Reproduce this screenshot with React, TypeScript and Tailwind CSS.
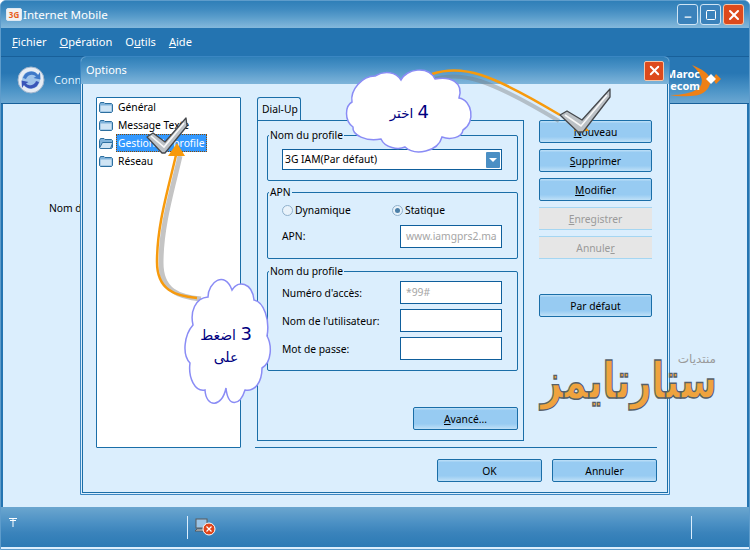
import type { ReactNode } from "react";
import { Minus, Square, X } from "lucide-react";

const font = { fontFamily: '"Noto Sans", "DejaVu Sans", sans-serif' };
const arabic = { fontFamily: '"DejaVu Sans", sans-serif' };

function Btn({ w = "w-[113px]", label, u, after, off }: { w?: string; label?: string; u: string; after?: string; off?: boolean }) {
  if (off) {
    return (
      <div className={`${w} h-[23px] shrink-0 flex items-center justify-center bg-[#e6e6e6] border-y border-[#a5d6f2] pt-[2px] text-[10.3px] text-[#9a9a9a]`}>
        {label}<span className="underline">{u}</span>{after}
      </div>
    );
  }
  return (
    <button className={`${w} h-[23px] shrink-0 flex items-center justify-center rounded-[2px] border border-[#1a6ea8] bg-[linear-gradient(#bfe0f7_0,#97cbf2_12%,#97cbf2_75%,#bfe0f7_100%)] pt-[2px] text-[10.3px] text-black`}>
      {label}<span className="underline">{u}</span>{after}
    </button>
  );
}

function Group({ title, className, children }: { title: string; className: string; children: ReactNode }) {
  return (
    <div className={`relative ml-[9px] mr-[5px] rounded-[2px] border border-[#1a6ea8] ${className}`}>
      <span className="absolute left-[1px] top-[-8px] bg-[#dbeefd] px-px text-[10.3px] leading-[14px] text-black">{title}</span>
      {children}
    </div>
  );
}

function Input({ value, className = "w-[102px]" }: { value?: string; className?: string }) {
  return (
    <div className={`${className} h-[23px] border border-[#0f5f9c] bg-white px-[5px] text-[10.3px] leading-[20px] text-[#a5a5a5]`}>{value}</div>
  );
}

function Folder({ open }: { open?: boolean }) {
  return (
    <svg width="14" height="11" viewBox="0 0 14 11" className="shrink-0">
      <path d="M.5 2.5 L1.5 .5 H5 L6 1.5 H12.5 L13.5 2.5 V9.5 L12.5 10.5 H1.5 L.5 9.5 Z" fill="#7fb2da" stroke="#2d6f9f" />
      {open ? <path d="M.5 10 L3.5 4.5 H13.8 L11.5 10.5 H1.5 Z" fill="#cfe4f4" stroke="#2d6f9f" /> : <rect x="1.5" y="3.5" width="11" height="6" fill="#cfe4f4" />}
    </svg>
  );
}

function Check({ d, hi }: { d: string; hi: string }) {
  return (
    <g>
      <path d={d} fill="#bcc1c6" stroke="#45484c" strokeWidth="1.3" strokeLinejoin="round" />
      <path d={hi} fill="none" stroke="#f8f8f8" strokeWidth="1.6" />
    </g>
  );
}

export default function App() {
  return (
    <div style={font} className="relative h-[550px] w-[750px] overflow-hidden flex flex-col rounded-t-[6px] bg-[#2b7ab5] border border-[#5e9ccb] text-black">
      {/* main window */}
      <div className="h-[27px] shrink-0 flex items-center bg-[linear-gradient(#2f7fb8_0,#3f8ac0_30%,#5a9dcb_60%,#84b8dc_100%)] pl-[5px] pr-[5px]">
        <span className="h-[13px] w-[16px] rounded-[2px] border border-[#dfe9f2] bg-[#f2f2f2] text-[8px] leading-[11px] font-bold text-[#e8601c] text-center">3G</span>
        <span className="ml-[1px] text-[11.6px] text-white">Internet Mobile</span>
        <div className="ml-auto flex gap-[2px]">
          <span className="flex h-[21px] w-[21px] items-end justify-center rounded-[3px] border border-[#cfe4f4] bg-[#3b82bb] pb-[2px]"><Minus size={10} strokeWidth={3} className="text-white" /></span>
          <span className="flex h-[21px] w-[21px] items-center justify-center rounded-[3px] border border-[#cfe4f4] bg-[#3b82bb]"><Square size={12} strokeWidth={2} className="text-white" /></span>
          <span className="flex h-[21px] w-[21px] items-center justify-center rounded-[3px] border border-[#f3c5a8] bg-[#dd4a1c]"><X size={16} strokeWidth={3} className="text-white" /></span>
        </div>
      </div>
      <div className="h-[28px] shrink-0 flex items-center gap-[13px] bg-[#2474b1] pl-[11px] text-[11.1px] text-white">
        <span><u>F</u>ichier</span>
        <span><u>O</u>pération</span>
        <span>O<u>u</u>tils</span>
        <span><u>A</u>ide</span>
      </div>
      <div className="h-[48px] shrink-0 flex items-center justify-between border-y border-[#18609a] bg-[linear-gradient(#2877b4_0,#2877b4_35%,#4f96c8_75%,#6ba7d2_100%)] pl-[16px] pr-[27px]">
        <div className="flex items-center gap-[9px]">
          <svg width="28" height="28" viewBox="0 0 28 28">
            <circle cx="14" cy="14" r="13" fill="#e6ecf4" stroke="#9fb4cc" />
            <circle cx="14" cy="14" r="9" fill="#9fc3ea" />
            <path d="M6 12 A8.5 8.5 0 0 1 21 9 L23 6 L23.5 13.5 L16.5 12 L19 10.5 A6 6 0 0 0 9 13 Z" fill="#3f78c8" />
            <path d="M22 16 A8.5 8.5 0 0 1 7 19 L5 22 L4.5 14.5 L11.5 16 L9 17.5 A6 6 0 0 0 19 15 Z" fill="#3a55b8" />
          </svg>
          <span className="text-[11.1px] text-[#dbeefd]">Connexion</span>
        </div>
        <div className="relative h-[33px] w-[52px]">
          <svg width="52" height="33" viewBox="0 0 52 33" className="absolute left-0 top-0">
            <path d="M0 31 Q18 31 28 25 Q38 16 22 1 Q44 10 40 20 Q36 32 20 32 Q8 33 0 31 Z" fill="#ee8016" />
            <path d="M46 10 L51 15 L46 20 L43 15 Z" fill="#ee8016" />
            <path d="M41 10 L46 15 L41 20 L36 15 Z" fill="#fff" />
          </svg>
          <div className="absolute right-[22px] top-[4px] w-[48px] whitespace-nowrap text-right text-[11px] leading-[12px] font-bold text-white">Maroc<br />Telecom</div>
        </div>
      </div>
      <div className="relative flex-1 border-x-2 border-[#2474b1] bg-[#dbeefd]">
        <span className="absolute left-[46px] top-[97px] text-[10.3px]">Nom de</span>
      </div>
      <div className="h-[42px] shrink-0 border-b-2 border-[#dbeefd] flex items-start bg-[linear-gradient(#6ba6cf_0,#4b90c4_40%,#3a83bb_65%,#2b7ab5_100%)] pt-[11px] pl-[8px]">
        <svg width="8" height="9" viewBox="0 0 8 9">
          <path d="M0 .5 H8 M1 2.5 H7 M4 .5 V9" stroke="#fff" fill="none" />
        </svg>
      </div>

      {/* options dialog */}
      <div className="absolute left-[79px] top-[55px] h-[439px] w-[590px] flex flex-col rounded-t-[6px] border border-[#3a86c2] bg-[#dbeefd]">
        <div className="h-[27px] shrink-0 flex items-center justify-between rounded-t-[5px] bg-[linear-gradient(#2f7fb8_0,#4a92c6_40%,#7fb5da_100%)] pl-[5px] pr-[5px]">
          <span className="text-[11px] text-white">Options</span>
          <span className="flex h-[20px] w-[20px] items-center justify-center rounded-[2px] border border-[#f3c5a8] bg-[#dd4a1c]"><X size={15} strokeWidth={3} className="text-white" /></span>
        </div>
        <div className="mx-px mb-px flex flex-1 flex-col border border-t-0 border-[#1a6ea8] px-[13px] pt-[13px]">
          <div className="flex h-[351px] gap-[16px]">
            <div className="w-[145px] rounded-[1px] border border-[#1a6ea8] bg-white pl-[2px] text-[10.3px]">
              {["Général", "Message Texte", "Gestion du profile", "Réseau"].map((t, i) => (
                <div key={t} className="flex h-[18px] items-center gap-[3px]">
                  <Folder open={i === 2} />
                  <span className={i === 2 ? "h-[18px] border border-dotted border-[#8a4a00] bg-[#3399ff] px-px leading-[17px] text-white" : "pl-[2px] pt-[2px]"}>{t}</span>
                </div>
              ))}
            </div>
            <div className="flex flex-1 gap-[15px]">
              <div className="w-[267px] flex flex-col">
                <div className="h-[23px] w-[44px] whitespace-nowrap rounded-t-[3px] border border-b-0 border-[#1a6ea8] pl-[4px] pt-[3px] text-[10.3px] leading-[16px]">Dial-Up</div>
                <div className="flex h-[321px] flex-col border border-[#1a6ea8] pt-[14px]">
                  <Group title="Nom du profile" className="h-[46px] pl-[14px] pt-[13px]">
                    <div className="flex h-[21px] w-[220px] items-center justify-between border border-[#0f5f9c] bg-white pl-[2px] pr-[1px] text-[10.3px]">
                      3G IAM(Par défaut)
                      <span className="flex h-[16px] w-[14px] items-center justify-center rounded-[1px] bg-[#4b8fc4]"><span className="h-0 w-0 border-x-[4px] border-t-[4px] border-x-transparent border-t-white" /></span>
                    </div>
                  </Group>
                  <Group title="APN" className="mt-[11px] h-[67px] pl-[14px] pt-[10px] text-[10.3px]">
                    <div className="flex h-[14px] items-center">
                      <div className="flex w-[110px] items-center">
                        <span className="h-[11px] w-[11px] rounded-full border border-[#8fb0cc] bg-[#e8f2fa]" />
                        <span className="ml-[2px] pt-[2px]">Dynamique</span>
                      </div>
                      <span className="flex h-[11px] w-[11px] items-center justify-center rounded-full border border-[#8fb0cc] bg-[#e8f2fa]"><span className="h-[5px] w-[5px] rounded-full bg-[#4b7fa8]" /></span>
                      <span className="ml-[2px] pt-[2px]">Statique</span>
                    </div>
                    <div className="mt-[8px] flex items-center justify-between pr-[15px]">
                      <span>APN:</span>
                      <Input value="www.iamgprs2.ma" />
                    </div>
                  </Group>
                  <Group title="Nom du profile" className="mt-[12px] h-[100px] pl-[14px] pr-[15px] pt-[9px] text-[10.3px]">
                    {[["Numéro d'accès:", "*99#"], ["Nom de l'utilisateur:", ""], ["Mot de passe:", ""]].map(([l, v]) => (
                      <div key={l} className="mb-[5px] flex items-center justify-between">
                        <span className="pt-[2px]">{l}</span>
                        <Input value={v} />
                      </div>
                    ))}
                  </Group>
                  <div className="mt-[36px] flex justify-end pr-[5px]"><Btn w="w-[105px]" u="A" after="vancé..." /></div>
                </div>
              </div>
              <div className="flex flex-col gap-[6px] pt-[23px]">
                <Btn u="N" after="ouveau" />
                <Btn u="S" after="upprimer" />
                <Btn u="M" after="odifier" />
                <Btn u="E" after="nregistrer" off />
                <Btn label="Annule" u="r" off />
                <div className="mt-[29px]"><Btn label="Par défaut" u="" /></div>
              </div>
            </div>
          </div>
          <div className="ml-[159px] mt-[-1px] w-[402px] shrink-0 border-t border-[#1a6ea8]" />
          <div className="ml-[341px] mt-[11px] flex gap-[10px]">
            <Btn w="w-[105px]" label="OK" u="" />
            <Btn w="w-[105px]" label="Annuler" u="" />
          </div>
        </div>
      </div>

      {/* status dividers */}
      <div className="absolute left-[186px] top-[515px] h-[23px] w-px bg-[#dbeefd]" />
      <div className="absolute left-[690px] top-[515px] h-[23px] w-px bg-[#dbeefd]" />

      {/* annotations drawn over the shot, in page coordinates */}
      <svg width="750" height="550" className="pointer-events-none absolute left-[-1px] top-[-1px]">
        <g transform="translate(194 518)">
          <rect x="2" y="1" width="11" height="9" fill="#9cc5e6" stroke="#5a5a5a" />
          <path d="M1 13 L14 13 L14 11 L3 11 Z" fill="#d8d8d8" stroke="#5a5a5a" />
          <circle cx="15" cy="11" r="6" fill="#e0451a" stroke="#fff" />
          <path d="M12.5 8.5 L17.5 13.5 M17.5 8.5 L12.5 13.5" stroke="#fff" strokeWidth="1.2" />
        </g>

        <path d="M432 76 C462 66 490 75 560 117" fill="none" stroke="#777" strokeOpacity=".4" strokeWidth="4" transform="translate(-1 4)" />
        <path d="M432 74 C462 64 490 73 560 115" fill="none" stroke="#f79a0c" strokeWidth="2.5" />
        <path d="M197 298 C175 296 157 290 157 262 C157 225 168 190 176 155" fill="none" stroke="#c4c4c4" strokeWidth="5" transform="translate(4 1)" />
        <path d="M197 298 C175 296 157 290 157 262 C157 225 168 190 176 155" fill="none" stroke="#f79a0c" strokeWidth="2.5" />
        <path d="M168 156 L177 143 L185 156 Z" fill="#f79a0c" />
        <path d="M574 131 L580 119 L589 131 Z" fill="#f79a0c" />

        <Check d="M147 137 L153 133 L165 142 L186 118 L187 126 L165 153 L162 153 Z" hi="M151 136 L164 147 L184 123" />
        <Check d="M560 115 L567 111 L582 120 L610 89 L610 97 L583 132 L578 132 Z" hi="M565 115 L581 126 L607 95" />

        <path
          d="M375 76 C385 70 396 72 401 80 C406 69 428 65 435 79 C450 76 464 82 459 98 C472 100 476 122 463 130 C462 138 450 140 442 137 C438 152 415 156 405 147 C398 150 385 148 381 139 C366 142 352 135 353 127 C344 120 345 106 352 102 C350 90 362 76 375 76 Z"
          fill="#fff" stroke="#8a8cf5" strokeWidth="1.5"
        />
        <path
          d="M208 297 C208 282 225 270 232 290 C238 280 252 282 254 300 C264 302 270 320 267 336 C272 345 272 362 262 368 C262 382 255 392 245 390 C240 406 228 408 226 388 C222 408 206 408 205 390 C195 392 188 378 190 363 C182 355 184 335 193 325 C190 312 195 298 208 297 Z"
          fill="#fff" stroke="#8a8cf5" strokeWidth="1.5"
        />
      </svg>

      <div dir="rtl" style={arabic} className="absolute left-[383px] top-[99px] w-[45px] whitespace-nowrap text-[13.5px] leading-[24px] text-[#000080]">
        <span className="text-[18px]">4</span> اختر
      </div>
      <div dir="rtl" style={arabic} className="absolute left-[196px] top-[322px] w-[58px] text-center text-[14px] leading-[22px] text-[#000080]">
        <span className="text-[18px]">3</span> اضغط على
      </div>
      <div dir="rtl" style={arabic} className="absolute left-[538px] top-[367px] w-[178px] origin-bottom scale-y-[1.35] whitespace-nowrap text-[37px] leading-[42px] font-bold text-[#efa33e] [-webkit-text-stroke:1px_#55606a]">ستارتايمز</div>
      <div dir="rtl" style={arabic} className="absolute left-[668px] top-[351px] w-[47px] whitespace-nowrap text-[12px] leading-[14px] text-[#9a9a9a]">منتديات</div>
    </div>
  );
}
